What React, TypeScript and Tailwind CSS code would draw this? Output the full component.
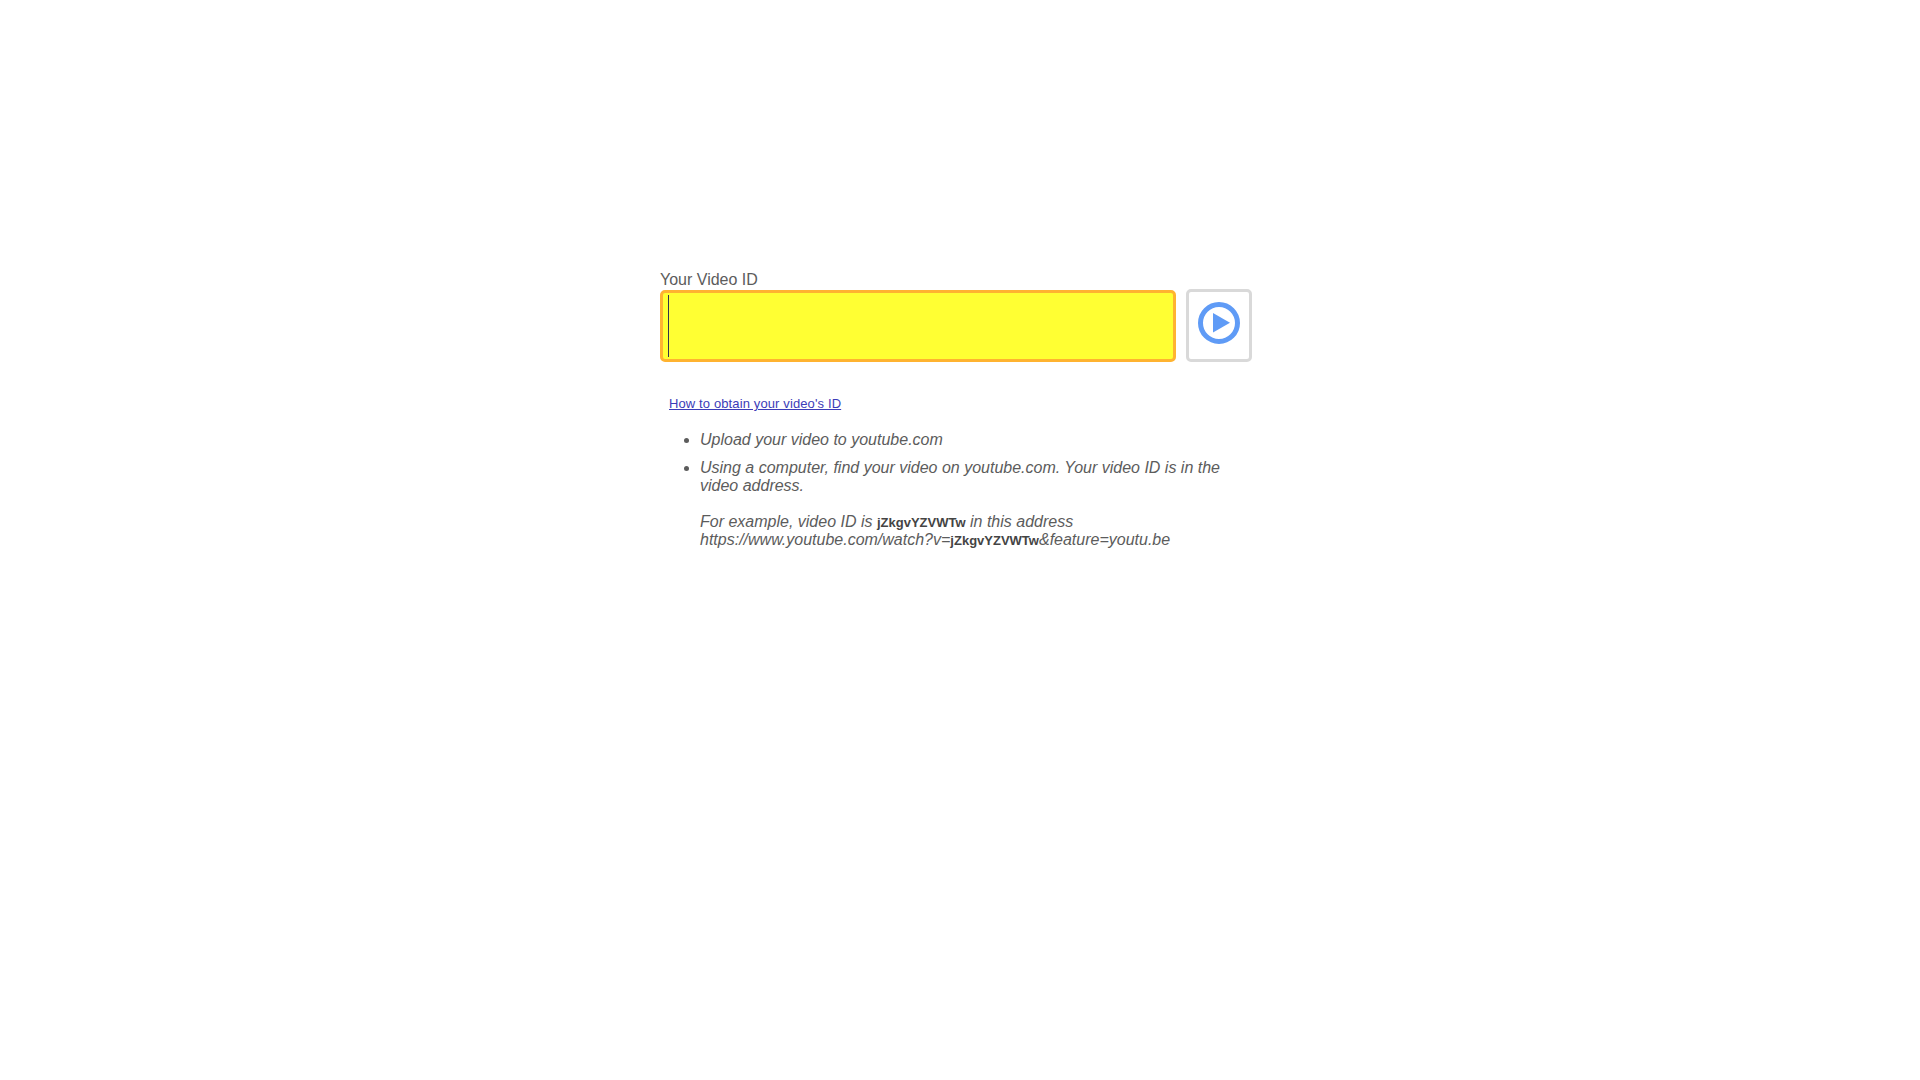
export default function App() {
  return (
    <div className="min-h-screen bg-white font-['Liberation_Sans',Arial,sans-serif] text-[#5c5c5c]">
      <div className="mx-auto w-[600px] pt-[271px]">
        <div className="text-base leading-[18px] h-[18px]">Your Video ID</div>

        <div className="flex items-start">
          <div className="w-[516px] h-[72px] mt-px border-[3px] border-[#ffb330] rounded-[5px] bg-[#ffff33] pl-[5px] pt-[2px]">
            <div className="w-px h-[62px] bg-[#33334d]" />
          </div>
          <button className="ml-[10px] w-[66px] h-[73px] border-[3px] border-[#d9d9d9] rounded-[5px] bg-white flex justify-center pt-[10px]">
            <svg width="42" height="42" viewBox="0 0 42 42">
              <circle cx="21" cy="21" r="18.5" fill="none" stroke="#5f9bf6" strokeWidth="5" />
              <path d="M15 11 L32 20.8 L15 30.6 Z" fill="#5f9bf6" />
            </svg>
          </button>
        </div>

        <div className="mt-[34px] ml-[9px] text-[13px] leading-[15px] tracking-[0.12px]">
          <a href="#" className="text-[#3c3cb8] underline">How to obtain your video's ID</a>
        </div>

        <ul className="list-disc mt-[20px] ml-[40px] pr-[30px] italic text-base leading-[18px]">
          <li className="mb-[10px]">Upload your video to youtube.com</li>
          <li>
            Using a computer, find your video on youtube.com. Your video ID is in the video address.
            <br />
            <br />
            For example, video ID is <b className="not-italic font-bold text-[13px] leading-none text-[#444]">jZkgvYZVWTw</b> in this address
            <br />
            https://www.youtube.com/watch?v=<b className="not-italic font-bold text-[13px] leading-none text-[#444]">jZkgvYZVWTw</b>&amp;feature=youtu.be
          </li>
        </ul>
      </div>
    </div>
  );
}
